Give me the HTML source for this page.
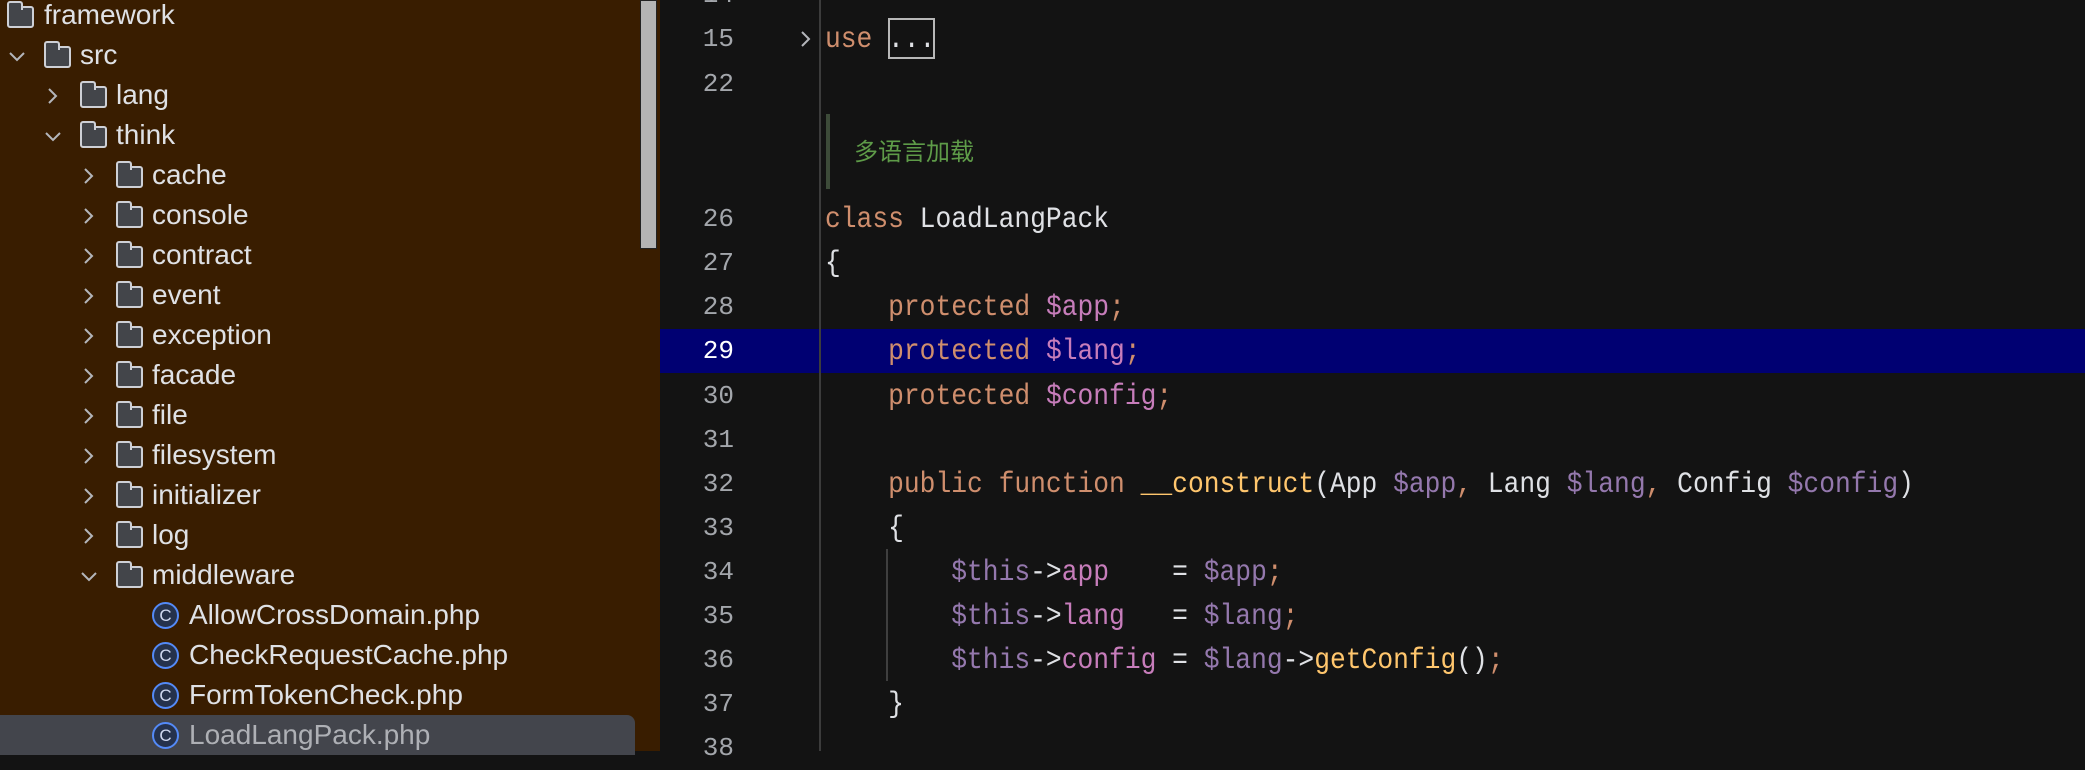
<!DOCTYPE html>
<html><head><meta charset="utf-8"><style>
*{margin:0;padding:0;box-sizing:border-box}
body{width:2085px;height:751px;overflow:hidden;background:#131313;position:relative;font-family:"Liberation Sans","Noto Sans CJK SC",sans-serif}
#side{position:absolute;left:0;top:0;width:660px;height:751px;background:#391d00}
#sb{position:absolute;left:640px;top:0;width:17px;height:249px;background:#b4b4b4;border:1px solid #222}
.r{position:absolute;left:0;width:640px;height:40px;line-height:40px;font-size:28px;color:#dfe1e5;white-space:nowrap}
.fo{position:absolute;width:27px;height:22px;top:11px;background:#43454a;border:2px solid #ced0d6;border-radius:3px}
.fo:before{content:"";position:absolute;left:-2px;top:-7px;width:12px;height:7px;border:2px solid #ced0d6;border-bottom:none;border-radius:3px 3px 0 0;background:#43454a}
.ch{position:absolute;top:12px}
.ci{position:absolute;top:7px;width:27px;height:27px;border:2px solid #548af7;border-radius:50%;background:#25324d;color:#cfd8f0;font-size:17px;line-height:23px;text-align:center}
.t{position:absolute;top:0}
#ed{position:absolute;left:660px;top:0;right:0;height:751px}
.ln{position:absolute;left:0;width:74px;text-align:right;font-family:"Liberation Mono",monospace;font-size:26px;color:#a3a6ab;height:44px;line-height:44px}
.cl{position:absolute;left:165px;font-family:"Liberation Mono",monospace;font-size:26.3px;height:44px;line-height:44px;color:#dfe1e5;white-space:pre;transform:scaleY(1.12);transform-origin:0 50%}
.k{color:#cf8e6d}.v{color:#c77dbb}.p{color:#9478ad}.f{color:#ffc66d}.th{color:#9478ad}
</style></head><body>
<svg width="0" height="0" style="position:absolute"><defs>
<symbol id="cr" viewBox="0 0 12 18"><polyline points="3,2 10,9 3,16" fill="none" stroke="#b4b6bb" stroke-width="2"/></symbol>
<symbol id="cd" viewBox="0 0 18 12"><polyline points="2,3 9,10 16,3" fill="none" stroke="#b4b6bb" stroke-width="2"/></symbol>
</defs></svg>
<div id="side">
<div class="r" style="top:-5px"><div class="fo" style="left:7px"></div><span class="t" style="left:44px">framework</span></div>
<div class="r" style="top:35px"><svg class="ch" style="left:8px;top:15px" width="18" height="12"><use href="#cd"/></svg><div class="fo" style="left:44px"></div><span class="t" style="left:80px">src</span></div>
<div class="r" style="top:75px"><svg class="ch" style="left:46px" width="12" height="18"><use href="#cr"/></svg><div class="fo" style="left:80px"></div><span class="t" style="left:116px">lang</span></div>
<div class="r" style="top:115px"><svg class="ch" style="left:44px;top:15px" width="18" height="12"><use href="#cd"/></svg><div class="fo" style="left:80px"></div><span class="t" style="left:116px">think</span></div>
<div class="r" style="top:155px"><svg class="ch" style="left:82px" width="12" height="18"><use href="#cr"/></svg><div class="fo" style="left:116px"></div><span class="t" style="left:152px">cache</span></div>
<div class="r" style="top:195px"><svg class="ch" style="left:82px" width="12" height="18"><use href="#cr"/></svg><div class="fo" style="left:116px"></div><span class="t" style="left:152px">console</span></div>
<div class="r" style="top:235px"><svg class="ch" style="left:82px" width="12" height="18"><use href="#cr"/></svg><div class="fo" style="left:116px"></div><span class="t" style="left:152px">contract</span></div>
<div class="r" style="top:275px"><svg class="ch" style="left:82px" width="12" height="18"><use href="#cr"/></svg><div class="fo" style="left:116px"></div><span class="t" style="left:152px">event</span></div>
<div class="r" style="top:315px"><svg class="ch" style="left:82px" width="12" height="18"><use href="#cr"/></svg><div class="fo" style="left:116px"></div><span class="t" style="left:152px">exception</span></div>
<div class="r" style="top:355px"><svg class="ch" style="left:82px" width="12" height="18"><use href="#cr"/></svg><div class="fo" style="left:116px"></div><span class="t" style="left:152px">facade</span></div>
<div class="r" style="top:395px"><svg class="ch" style="left:82px" width="12" height="18"><use href="#cr"/></svg><div class="fo" style="left:116px"></div><span class="t" style="left:152px">file</span></div>
<div class="r" style="top:435px"><svg class="ch" style="left:82px" width="12" height="18"><use href="#cr"/></svg><div class="fo" style="left:116px"></div><span class="t" style="left:152px">filesystem</span></div>
<div class="r" style="top:475px"><svg class="ch" style="left:82px" width="12" height="18"><use href="#cr"/></svg><div class="fo" style="left:116px"></div><span class="t" style="left:152px">initializer</span></div>
<div class="r" style="top:515px"><svg class="ch" style="left:82px" width="12" height="18"><use href="#cr"/></svg><div class="fo" style="left:116px"></div><span class="t" style="left:152px">log</span></div>
<div class="r" style="top:555px"><svg class="ch" style="left:80px;top:15px" width="18" height="12"><use href="#cd"/></svg><div class="fo" style="left:116px"></div><span class="t" style="left:152px">middleware</span></div>
<div class="r" style="top:595px"><div class="ci" style="left:152px">C</div><span class="t" style="left:189px">AllowCrossDomain.php</span></div>
<div class="r" style="top:635px"><div class="ci" style="left:152px">C</div><span class="t" style="left:189px">CheckRequestCache.php</span></div>
<div class="r" style="top:675px"><div class="ci" style="left:152px">C</div><span class="t" style="left:189px">FormTokenCheck.php</span></div>
<div style="position:absolute;left:0;top:715px;width:635px;height:40px;background:#43454c;border-radius:0 8px 0 0"></div>
<div class="r" style="top:715px;color:#aeb0b5"><div class="ci" style="left:152px">C</div><span class="t" style="left:189px">LoadLangPack.php</span></div>
<div id="sb"></div>
</div>
<div id="ed">
<div style="position:absolute;left:0;top:329px;right:0;height:44px;background:#000072"></div>
<div style="position:absolute;left:159px;top:0;width:2px;height:751px;background:#3c3c3c"></div>
<div class="ln" style="top:-27px">14</div>
<div class="ln" style="top:17px">15</div><svg style="position:absolute;left:139px;top:30px" width="12" height="18"><use href="#cr"/></svg>
<div class="cl k" style="top:17px">use</div>
<div style="position:absolute;left:228px;top:18px;width:47px;height:41px;border:2px solid #b8b8b8"></div>
<div class="cl" style="top:17px;left:228px">...</div>
<div class="ln" style="top:62px">22</div>
<div style="position:absolute;left:166px;top:114px;width:4px;height:75px;background:#3d4b39"></div>
<div style="position:absolute;left:194px;top:132px;font-size:24px;color:#5e9b48;font-family:'Noto Sans CJK SC',sans-serif;line-height:36px">多语言加载</div>
<div class="ln" style="top:197px">26</div><div class="cl" style="top:197px"><span class="k">class</span> LoadLangPack</div>
<div class="ln" style="top:241px">27</div><div class="cl" style="top:241px">{</div>
<div class="ln" style="top:285px">28</div><div class="cl" style="top:285px">    <span class="k">protected</span> <span class="v">$app</span><span class="k">;</span></div>
<div class="ln" style="top:329px;color:#fff">29</div><div class="cl" style="top:329px">    <span class="k">protected</span> <span class="v">$lang</span><span class="k">;</span></div>
<div class="ln" style="top:374px">30</div><div class="cl" style="top:374px">    <span class="k">protected</span> <span class="v">$config</span><span class="k">;</span></div>
<div class="ln" style="top:418px">31</div>
<div class="ln" style="top:462px">32</div><div class="cl" style="top:462px">    <span class="k">public function</span> <span class="f">__construct</span>(App <span class="p">$app</span><span class="k">,</span> Lang <span class="p">$lang</span><span class="k">,</span> Config <span class="p">$config</span>)</div>
<div class="ln" style="top:506px">33</div><div class="cl" style="top:506px">    {</div>
<div style="position:absolute;left:226px;top:549px;width:2px;height:132px;background:#3f3f3f"></div>
<div class="ln" style="top:550px">34</div><div class="cl" style="top:550px">        <span class="th">$this</span>-&gt;<span class="v">app</span>    = <span class="p">$app</span><span class="k">;</span></div>
<div class="ln" style="top:594px">35</div><div class="cl" style="top:594px">        <span class="th">$this</span>-&gt;<span class="v">lang</span>   = <span class="p">$lang</span><span class="k">;</span></div>
<div class="ln" style="top:638px">36</div><div class="cl" style="top:638px">        <span class="th">$this</span>-&gt;<span class="v">config</span> = <span class="p">$lang</span>-&gt;<span class="f">getConfig</span>()<span class="k">;</span></div>
<div class="ln" style="top:682px">37</div><div class="cl" style="top:682px">    }</div>
<div class="ln" style="top:726px">38</div>
</div>
</body></html>
